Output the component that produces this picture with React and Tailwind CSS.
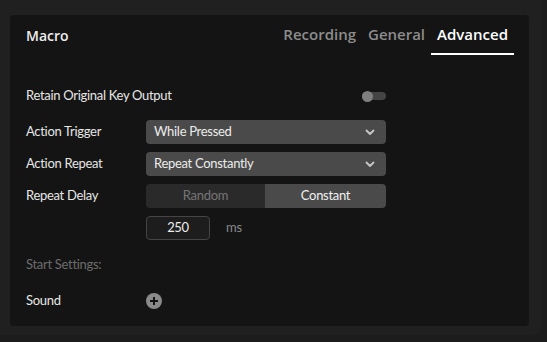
import React from "react";

function Chevron() {
  return (
    <svg width="12" height="12" viewBox="0 0 12 12" className="text-[#c8c8c8]">
      <path d="M2.5 4.5 L6 8 L9.5 4.5" fill="none" stroke="currentColor" strokeWidth="1.8" strokeLinecap="round" strokeLinejoin="round" />
    </svg>
  );
}

function Select({ value }) {
  return (
    <div className="w-[240px] h-[24px] bg-[#4a4a4a] rounded-[4px] flex items-center justify-between pl-[8px] pr-[10px] text-[13px] text-[#ececec]">
      <span>{value}</span>
      <Chevron />
    </div>
  );
}

export default function App() {
  return (
    <div
      className="w-[547px] h-[342px] bg-[#1c1c1c] overflow-hidden tracking-[-0.3px]"
      style={{ fontFamily: "Lato, 'Open Sans', sans-serif" }}
    >
      <div className="w-[541px] h-[335px] bg-[#202020] rounded-br-[8px] pl-[10px] pt-[15px]">
        <div className="w-[519px] h-[311px] bg-[#141414] rounded-[4px] flex flex-col">
          <div className="flex items-start justify-between h-[40px] pl-[16px] pr-[15px]">
            <div
              className="text-[14px] font-semibold text-[#ededed] pt-[10px] tracking-normal"
              style={{ fontFamily: "'Open Sans', sans-serif" }}
            >
              Macro
            </div>
            <div
              className="flex items-start text-[15px] font-semibold tracking-normal"
              style={{ fontFamily: "'Open Sans', sans-serif" }}
            >
              <div className="text-[#8c8c8c] pt-[8px] px-[6px]">Recording</div>
              <div className="text-[#8c8c8c] pt-[8px] px-[6px]">General</div>
              <div className="text-white pt-[8px] px-[6px] h-[40px] border-b-2 border-white">Advanced</div>
            </div>
          </div>
          <div className="flex flex-col pl-[16px] pt-[30px]">
            <div className="flex items-center h-[22px] w-[360px] justify-between text-[13px] text-[#e6e6e6]">
              <span>Retain Original Key Output</span>
              <div className="relative w-[24px] h-[11px] flex items-center">
                <div className="w-[24px] h-[8px] bg-[#444444] rounded-full" />
                <div className="absolute left-0 top-0 w-[11px] h-[11px] rounded-full bg-[#7f7f7f]" />
              </div>
            </div>
            <div className="flex items-center mt-[13px] text-[13px] text-[#e6e6e6]">
              <span className="w-[120px]">Action Trigger</span>
              <Select value="While Pressed" />
            </div>
            <div className="flex items-center mt-[8px] text-[13px] text-[#e6e6e6]">
              <span className="w-[120px]">Action Repeat</span>
              <Select value="Repeat Constantly" />
            </div>
            <div className="flex items-center mt-[8px] text-[13px] text-[#e6e6e6]">
              <span className="w-[120px]">Repeat Delay</span>
              <div className="w-[240px] h-[24px] flex rounded-[4px] overflow-hidden">
                <div className="w-[119px] bg-[#2a2a2a] flex items-center justify-center text-[#767676]">Random</div>
                <div className="flex-1 bg-[#4a4a4a] flex items-center justify-center text-[#f0f0f0]">Constant</div>
              </div>
            </div>
            <div className="flex items-center mt-[8px] pl-[120px] text-[13px]">
              <div className="w-[64px] h-[24px] bg-[#1d1d1d] border border-[#454545] rounded-[4px] flex items-center justify-center text-[#ececec]">250</div>
              <span className="ml-[16px] text-[#8a8a8a]">ms</span>
            </div>
            <div className="mt-[16px] h-[18px] flex items-center text-[13px] text-[#6c6c6c]">Start Settings:</div>
            <div className="flex items-center mt-[17px] text-[13px] text-[#e6e6e6]">
              <span className="w-[120px]">Sound</span>
              <svg width="16" height="16" viewBox="0 0 16 16">
                <circle cx="8" cy="8" r="8" fill="#8a8a8a" />
                <path d="M8 4 V12 M4 8 H12" stroke="#141414" strokeWidth="2" />
              </svg>
            </div>
          </div>
        </div>
      </div>
    </div>
  );
}
